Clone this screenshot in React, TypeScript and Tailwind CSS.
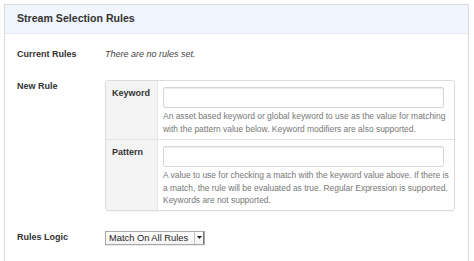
import React from 'react';

const font = { fontFamily: '"Liberation Sans", Arial, Helvetica, sans-serif' };

const RuleRow: React.FC<{ label: string; help: string[]; last?: boolean }> = ({ label, help, last }) => (
  <div className={`flex ${last ? '' : 'border-b border-[#e2e2e2]'}`}>
    <div className="w-[52px] shrink-0 bg-[#f4f4f4] border-r border-[#e6e6e6] pl-[6px] pt-[7px] text-[9px] leading-[11px] font-bold text-[#333]">
      {label}
    </div>
    <div className={`flex-1 pl-[5px] pt-[6px] ${last ? 'pb-[3px]' : 'pb-[4px]'}`}>
      <div className="w-[281px] h-[21px] bg-white border border-[#d6d6d6] rounded-[2px] shadow-[inset_0_1px_1px_rgba(0,0,0,0.08)]" />
      <div className="mt-[2px] text-[8.45px] leading-[12.5px] text-[#777] whitespace-nowrap">
        {help.map((line) => (
          <div key={line}>{line}</div>
        ))}
      </div>
    </div>
  </div>
);

export default function App() {
  return (
    <div className="w-[474px] h-[261px] bg-white overflow-hidden pt-[4px] pl-[4px] pr-[5px]" style={font}>
      <div className="h-[270px] border border-[#dadada] border-b-0">
        <div className="h-[29px] bg-[#f1f5fd] border-b border-[#e2e6ef] flex items-center pl-[12px] text-[10.6px] font-bold text-[#333]">
          Stream Selection Rules
        </div>

        <div className="flex mt-[15px] text-[9px] leading-[11px]">
          <div className="w-[100px] pl-[12px] font-bold text-[#333]">Current Rules</div>
          <div className="italic text-[#444]">There are no rules set.</div>
        </div>

        <div className="flex mt-[20px]">
          <div className="w-[100px] pl-[12px] pt-[1px] text-[9px] leading-[11px] font-bold text-[#333]">New Rule</div>
          <div className="w-[350px] border border-[#dcdcdc] rounded-[3px] overflow-hidden shadow-[0_1px_1px_rgba(0,0,0,0.04)]">
            <RuleRow
              label="Keyword"
              help={[
                'An asset based keyword or global keyword to use as the value for matching',
                'with the pattern value below. Keyword modifiers are also supported.',
              ]}
            />
            <RuleRow
              label="Pattern"
              last
              help={[
                'A value to use for checking a match with the keyword value above. If there is',
                'a match, the rule will be evaluated as true. Regular Expression is supported.',
                'Keywords are not supported.',
              ]}
            />
          </div>
        </div>

        <div className="flex items-center mt-[20px]">
          <div className="w-[100px] pl-[12px] text-[9px] leading-[11px] font-bold text-[#333]">Rules Logic</div>
          <div className="w-[100px] h-[14px] flex border border-[#a9a9a9] bg-gradient-to-b from-white to-[#f3f3f3] shadow-[0_1px_0_rgba(0,0,0,0.08)]">
            <div className="flex-1 pl-[3px] text-[9.3px] leading-[12px] text-[#222] whitespace-nowrap">Match On All Rules</div>
            <div className="w-[10px] border-l border-[#c4c4c4] border-r border-r-[#777] flex items-center justify-center">
              <svg width="5" height="3" viewBox="0 0 5 3">
                <path d="M0 0 L5 0 L2.5 3 Z" fill="#222" />
              </svg>
            </div>
          </div>
        </div>
      </div>
    </div>
  );
}
